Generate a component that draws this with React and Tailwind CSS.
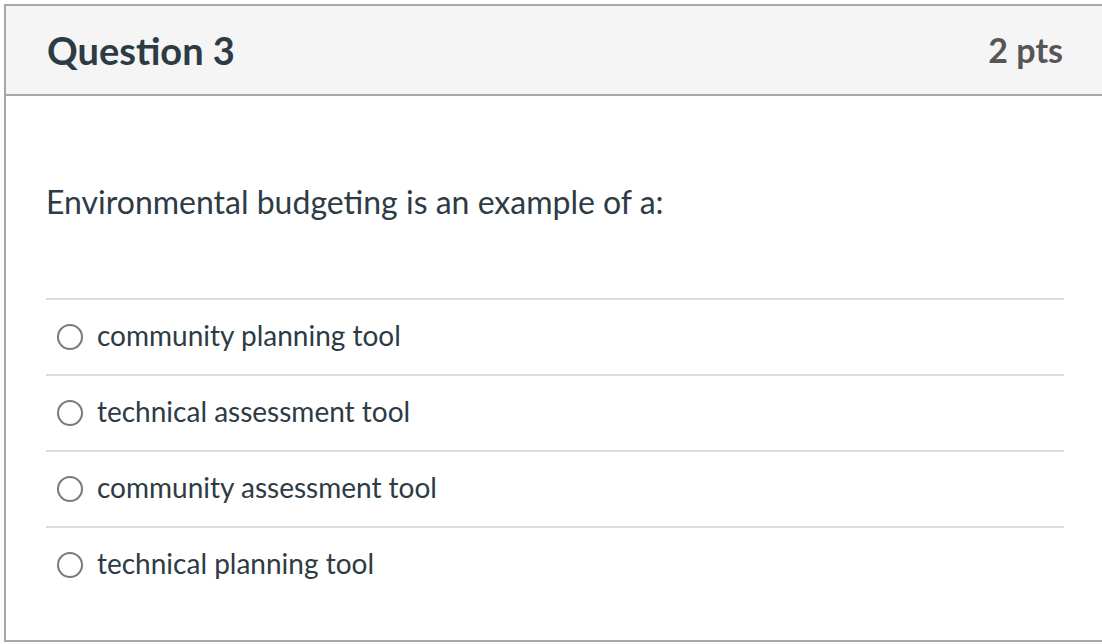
const answers = [
  'community planning tool',
  'technical assessment tool',
  'community assessment tool',
  'technical planning tool',
];

const App = () => {
  return (
    <div className="min-h-screen bg-white pl-1 pt-1" style={{ fontFamily: 'Lato, "Open Sans", sans-serif' }}>
      <div className="border-l-2 border-t-2 border-b-2 border-[#a8a8a8] h-[638px] flex flex-col">
        {/* Header */}
        <div className="h-[90px] shrink-0 bg-[#f5f5f5] border-b-2 border-[#a8a8a8] flex items-center justify-between pl-[41px] pr-[39px]">
          <h2 className="text-[38px] font-bold text-[#2d3b45] leading-none">Question 3</h2>
          <span className="text-[34px] font-bold text-[#565656] leading-none">2 pts</span>
        </div>

        {/* Body */}
        <div className="flex-1 pl-[40px] pr-[38px]">
          <p className="pt-[88px] pb-[79px] text-[32px] leading-[35px] text-[#2d3b45]">
            Environmental budgeting is an example of a:
          </p>
          <div>
            {answers.map((a) => (
              <label key={a} className="h-[76px] border-t-2 border-[#dcdcdc] flex items-center gap-[14px] pl-[11px]">
                <span className="w-[26px] h-[26px] rounded-full border-2 border-[#7a7a7a] bg-white shrink-0" />
                <span className="text-[28px] leading-[32px] pb-[4px] text-[#2d3b45]">{a}</span>
              </label>
            ))}
          </div>
        </div>
      </div>
    </div>
  );
};

export default App;
